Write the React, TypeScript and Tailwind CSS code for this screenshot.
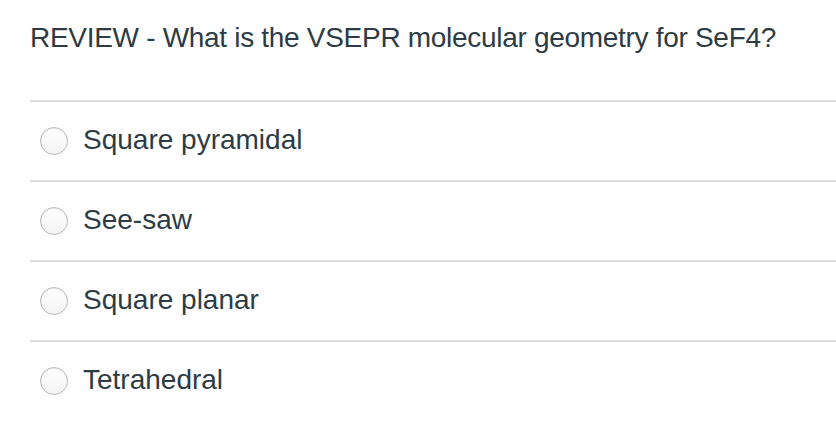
export default function App() {
  const options = ["Square pyramidal", "See-saw", "Square planar", "Tetrahedral"];
  return (
    <div className="w-[836px] h-[446px] bg-white pl-[30px] text-[#2d3b45]" style={{ fontFamily: '"Liberation Sans", Arial, sans-serif' }}>
      <div className="h-[100px] pt-[18px] text-[28px] leading-[40px] tracking-[-0.3px]">
        REVIEW - What is the VSEPR molecular geometry for SeF4?
      </div>
      {options.map((o) => (
        <div key={o} className="h-[80px] border-t-2 border-[#dddddd] flex items-center">
          <span className="ml-[10px] w-[28px] h-[28px] rounded-full border border-[#b8b8b8] bg-gradient-to-b from-white to-[#f4f4f4] shadow-[inset_0_1px_1px_rgba(0,0,0,0.08)]" />
          <span className="ml-[15px] text-[28px] leading-none -mt-[3px]">{o}</span>
        </div>
      ))}
    </div>
  );
}
